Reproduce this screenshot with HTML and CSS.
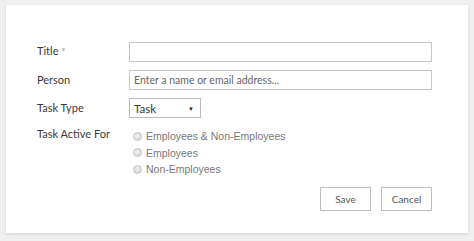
FILE: index.html
```html
<!DOCTYPE html>
<html lang="en">
<head>
    <meta charset="UTF-8">
    <title>New Task</title>
    <link rel="stylesheet" href="styles.css">
</head>
<body>
    <div class="panel">
        <div class="form">
            <label class="label" for="title">Title <span class="req">*</span></label>
            <input class="field" id="title" type="text">

            <label class="label" for="person">Person</label>
            <input class="field" id="person" type="text" placeholder="Enter a name or email address...">

            <label class="label" for="taskType">Task Type</label>
            <div class="select" id="taskType">
                <span>Task</span>
                <span class="arrow">&#9660;</span>
            </div>

            <div class="label top">Task Active For</div>
            <div class="radios">
                <label class="radio"><span class="dot"></span>Employees &amp; Non-Employees</label>
                <label class="radio"><span class="dot"></span>Employees</label>
                <label class="radio"><span class="dot"></span>Non-Employees</label>
            </div>
        </div>

        <div class="actions">
            <button class="btn">Save</button>
            <button class="btn">Cancel</button>
        </div>
    </div>
</body>
</html>
```

FILE: styles.css
```css
body {
    margin: 0;
    background-color: #f0f0f0;
    font-family: Lato, "Open Sans", sans-serif;
    color: #3a3a3a;
}

.panel {
    margin: 5px 6px;
    width: 462px;
    height: 228px;
    box-sizing: border-box;
    background-color: #fff;
    box-shadow: 0 1px 3px rgba(0, 0, 0, 0.12);
    padding: 37px 36px 0 31px;
}

.form {
    display: grid;
    grid-template-columns: 92px 1fr;
    row-gap: 8px;
    align-items: center;
}

.label {
    font-size: 11px;
    line-height: 13px;
    margin-bottom: 2px;
}

.label.top {
    align-self: start;
    margin: 1px 0 0;
}

.req {
    color: #7598b6;
    font-size: 10px;
}

.field {
    height: 20px;
    box-sizing: border-box;
    border: 1px solid #c6c6c6;
    padding: 0 4px;
    font-family: inherit;
    font-size: 10.5px;
    color: #444;
    outline: none;
}

.field::placeholder {
    color: #666;
}

.select {
    width: 72px;
    height: 20px;
    box-sizing: border-box;
    border: 1px solid #b9b9b9;
    display: flex;
    align-items: center;
    justify-content: space-between;
    padding: 0 6px 0 4px;
    font-size: 11.5px;
    color: #333;
}

.arrow {
    font-size: 6px;
    color: #222;
}

.radios {
    display: flex;
    flex-direction: column;
    align-self: start;
    margin-top: 2px;
}

.radio {
    display: flex;
    align-items: center;
    gap: 4px;
    font-family: "Liberation Sans", Arial, sans-serif;
    font-size: 10.5px;
    line-height: 16.5px;
    color: #777;
    padding-left: 4px;
}

.dot {
    width: 9px;
    height: 9px;
    box-sizing: border-box;
    border-radius: 50%;
    border: 1px solid #c2c2c2;
    background: radial-gradient(circle at 50% 40%, #eeeeee, #d6d6d6);
}

.actions {
    display: flex;
    justify-content: flex-end;
    gap: 10px;
    margin-top: 9px;
}

.btn {
    width: 51px;
    height: 24px;
    background-color: #fff;
    border: 1px solid #bdbdbd;
    font-family: inherit;
    font-size: 10px;
    color: #555;
    padding: 0;
}
```
